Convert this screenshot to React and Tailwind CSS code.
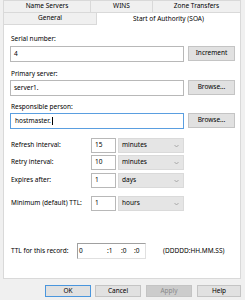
export default function App() {
  const Chevron = () => (
    <svg width="5" height="4" viewBox="0 0 5 4" className="block">
      <path d="M0.5 1 L2.5 3 L4.5 1" fill="none" stroke="#9a9a9a" strokeWidth="0.8" />
    </svg>
  );
  const IntervalRow = ({ label, value, unit, mt }) => (
    <div className={`flex items-center h-[15px] ${mt}`}>
      <div className="w-[81px] pl-[1px]">{label}</div>
      <div className="w-[25px] h-[15px] border border-[#b8b8b8] bg-white flex items-center pl-[3px]">{value}</div>
      <div className="w-[66px] h-[15px] ml-[2px] bg-[#e5e5e5] border border-[#dadada] flex items-center justify-between pl-[3px] pr-[4px]">
        <span>{unit}</span>
        <Chevron />
      </div>
    </div>
  );
  return (
    <div className="w-[245px] h-[300px] bg-[#f0f0f0] font-['Noto_Sans',sans-serif] text-[6.5px] leading-none text-black overflow-hidden">
      <div className="ml-[3px] w-[238px]">
        <div className="flex h-[13px] border-t border-l border-[#d9d9d9]">
          <div className="w-[87px] border-r border-b border-[#d9d9d9] flex items-center justify-center">Name Servers</div>
          <div className="w-[62px] border-r border-b border-[#d9d9d9] flex items-center justify-center">WINS</div>
          <div className="flex-1 border-r border-b border-[#d9d9d9] flex items-center justify-center">Zone Transfers</div>
        </div>
        <div className="flex h-[12px]">
          <div className="w-[94px] border-l border-r border-b border-[#d9d9d9] flex items-center justify-center">General</div>
          <div className="flex-1 bg-white border-r border-[#d9d9d9] flex items-center justify-center">Start of Authority (SOA)</div>
        </div>
        <div className="h-[254px] bg-white border-l border-r border-b border-[#d9d9d9] pl-[6px] pt-[9px]">
          <div className="h-[10px] flex items-center pl-[1px]">Serial number:</div>
          <div className="flex mt-[2px] gap-[4px]">
            <div className="w-[174px] h-[16px] border border-[#b8b8b8] flex items-center pl-[3px]">4</div>
            <div className="w-[47px] h-[15px] bg-[#e1e1e1] border border-[#c4c4c4] flex items-center justify-center">Increment</div>
          </div>
          <div className="h-[10px] mt-[7px] flex items-center pl-[1px]">Primary server:</div>
          <div className="flex mt-[1px] gap-[4px]">
            <div className="w-[174px] h-[16px] border border-[#b8b8b8] flex items-center pl-[3px]">server1.</div>
            <div className="w-[47px] h-[15px] bg-[#e1e1e1] border border-[#c4c4c4] flex items-center justify-center">Browse...</div>
          </div>
          <div className="h-[10px] mt-[6px] flex items-center pl-[1px]">Responsible person:</div>
          <div className="flex mt-[1px] gap-[4px]">
            <div className="w-[174px] h-[16px] border border-[#5a9ee0] flex items-center pl-[4px]">
              <span>hostmaster.</span>
              <span className="inline-block w-[1px] h-[8px] bg-black ml-[1px]" />
            </div>
            <div className="w-[47px] h-[15px] bg-[#e1e1e1] border border-[#c4c4c4] flex items-center justify-center">Browse...</div>
          </div>
          <IntervalRow label="Refresh interval:" value="15" unit="minutes" mt="mt-[9px]" />
          <IntervalRow label="Retry interval:" value="10" unit="minutes" mt="mt-[2px]" />
          <IntervalRow label="Expires after:" value="1" unit="days" mt="mt-[3px]" />
          <IntervalRow label="Minimum (default) TTL:" value="1" unit="hours" mt="mt-[8px]" />
          <div className="flex items-center mt-[32px] h-[16px]">
            <div className="w-[67px] pl-[1px]">TTL for this record:</div>
            <div className="w-[69px] h-[16px] border-t border-l border-[#a0a0a0] border-r border-b border-r-[#e0e0e0] border-b-[#e0e0e0] flex items-center pl-[1px]">
              <span className="w-[28px]">0</span>
              <span className="w-[14px]">:1</span>
              <span className="w-[13px]">:0</span>
              <span>:0</span>
            </div>
            <div className="ml-[17px]">(DDDDD:HH.MM.SS)</div>
          </div>
        </div>
      </div>
      <div className="flex mt-[6px] ml-[45px] h-[12px]">
        <div className="w-[46px] h-[12px] bg-[#e1e1e1] border border-[#4a96dd] flex items-center justify-center">OK</div>
        <div className="w-[46px] h-[12px] ml-[4px] bg-[#e1e1e1] border border-[#c4c4c4] flex items-center justify-center">Cancel</div>
        <div className="w-[46px] h-[12px] ml-[5px] bg-[#cccccc] border border-[#c4c4c4] text-[#8a8a8a] flex items-center justify-center">Apply</div>
        <div className="w-[44px] h-[12px] ml-[5px] bg-[#e1e1e1] border border-[#c4c4c4] flex items-center justify-center">Help</div>
      </div>
    </div>
  );
}
